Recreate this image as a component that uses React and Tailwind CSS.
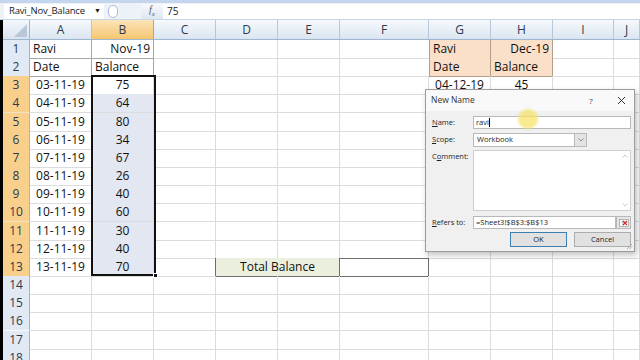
import React from 'react';

const GRID = 'grid grid-cols-[27px_62px_62px_62px_62px_62px_89px_62px_62px_61px_26px]';
const COLS = ['A', 'B', 'C', 'D', 'E', 'F', 'G', 'H', 'I', 'J'];

const dates = ['03-11-19', '04-11-19', '05-11-19', '06-11-19', '07-11-19', '08-11-19', '09-11-19', '10-11-19', '11-11-19', '12-11-19', '13-11-19'];
const values = [75, 64, 80, 34, 67, 26, 40, 60, 30, 40, 70];

const GRIDLINE = 'border-r border-b border-[#dadcdd]';

// returns { text, cls, span } for a cell; null means skip (merged away)
function cellFor(row, col) {
  let text = '';
  let cls = GRIDLINE + ' justify-center';
  let span = false;

  if (row <= 2 && (col === 'A' || col === 'B')) {
    cls = 'border-r border-b border-[#a6a6a6] justify-start pl-[3px]';
    if (row === 1 && col === 'A') text = 'Ravi';
    if (row === 1 && col === 'B') { text = 'Nov-19'; cls = 'border-r border-b border-[#a6a6a6] justify-end pr-[3px]'; }
    if (row === 2 && col === 'A') text = 'Date';
    if (row === 2 && col === 'B') text = 'Balance';
  }
  if (row <= 2 && col === 'F') cls = 'border-b border-[#dadcdd]';
  if (row <= 2 && (col === 'G' || col === 'H')) {
    cls = 'border-r border-b border-[#b39e8b] bg-[#fbe0c9] justify-start pl-[3px]';
    if (col === 'G') cls = 'border-l border-r border-b border-[#b39e8b] bg-[#fbe0c9] justify-start pl-[3px]';
    if (row === 1 && col === 'G') text = 'Ravi';
    if (row === 1 && col === 'H') { text = 'Dec-19'; cls = 'border-r border-b border-[#b39e8b] bg-[#fbe0c9] justify-end pr-[3px]'; }
    if (row === 2 && col === 'G') text = 'Date';
    if (row === 2 && col === 'H') text = 'Balance';
  }
  if (row >= 3 && row <= 13) {
    if (col === 'A') text = dates[row - 3];
    if (col === 'B') {
      text = String(values[row - 3]);
      cls = row === 3 ? GRIDLINE + ' justify-center bg-white' : GRIDLINE + ' justify-center bg-[#e2e7f2]';
    }
  }
  if (row === 3 && col === 'G') text = '04-12-19';
  if (row === 3 && col === 'H') text = '45';

  if (row === 12 && (col === 'D' || col === 'E' || col === 'F')) cls = 'border-r border-b border-r-[#dadcdd] border-b-[#6e6e6e]';
  if (row === 13) {
    if (col === 'C') cls = 'border-r border-b border-r-[#6e6e6e] border-b-[#dadcdd]';
    if (col === 'D') { text = 'Total Balance'; cls = 'border-r border-b border-[#6e6e6e] bg-[#ebf0de] justify-center'; span = true; }
    if (col === 'E') return null;
    if (col === 'F') cls = 'border-r border-b border-[#6e6e6e]';
  }
  return { text, cls, span };
}

const RowHeader = ({ row }) => {
  const selected = row >= 3 && row <= 13;
  return (
    <div
      className={
        selected
          ? 'flex items-center justify-center border-r border-b border-r-[#9eb6ce] border-b-[#f2e2c2] bg-[#f8d08c] text-[#2d3a4c]'
          : 'flex items-center justify-center border-r border-b border-r-[#9eb6ce] border-b-[#f7f9fc] bg-[#e1e9f5] text-[#2d3a4c]'
      }
    >
      {row}
    </div>
  );
};

const SheetRow = ({ row }) => (
  <div className={`${GRID} h-[18.17px]`}>
    <RowHeader row={row} />
    {COLS.map((col) => {
      const cell = cellFor(row, col);
      if (!cell) return null;
      return (
        <div
          key={col}
          className={`${cell.span ? 'col-span-2' : ''} flex items-center overflow-hidden whitespace-nowrap ${cell.cls}`}
        >
          {cell.text}
        </div>
      );
    })}
  </div>
);

const FormulaBar = () => (
  <div className="flex flex-col">
    <div className="h-[3px] bg-[#c3d6ed]" />
    <div className="h-[17px] flex items-center bg-[#edf2f9] border-b border-[#c9d6e6]">
      <div className="ml-[4px] w-[100px] h-[15px] bg-white flex items-center pl-[5px] pr-[3px]">
        <span className="flex-1 text-[9.5px] tracking-[-0.2px] text-[#1b1b1b]">Ravi_Nov_Balance</span>
        <span className="text-[7px] text-[#222]">▼</span>
      </div>
      <div className="ml-[4px] w-[10px] h-[13px] rounded-full border border-[#a9bcd4] bg-white" />
      <div className="ml-[23px] w-[22px] h-[15px] flex items-center justify-center bg-linear-to-b from-[#f7f9fc] to-[#dde6f1]">
        <span className="font-['Liberation_Serif',serif] italic text-[10px] text-[#555]">
          f<span className="text-[7px] align-sub">x</span>
        </span>
      </div>
      <div className="flex-1 h-[15px] bg-white flex items-center pl-[4px] text-[10px] text-[#1b1b1b]">75</div>
    </div>
  </div>
);

const ColumnHeader = () => (
  <div className={`${GRID} h-[20px] border-b border-[#9eb6ce]`}>
    <div className="border-r border-[#9eb6ce] bg-linear-to-b from-[#f4f7fb] to-[#dae4f0]">
      <svg width="27" height="19" viewBox="0 0 27 19">
        <polygon points="24,4 24,17 11,17" fill="#b9c7d9" />
      </svg>
    </div>
    {COLS.map((col) => (
      <div
        key={col}
        className={
          col === 'B'
            ? 'flex items-center justify-center border-r border-[#c9a35a] bg-linear-to-b from-[#fbe4b8] to-[#f5c66f] text-[#2d3a4c]'
            : 'flex items-center justify-center border-r border-[#b6c7dc] bg-linear-to-b from-[#f6f9fc] to-[#dbe5f1] text-[#2d3a4c]'
        }
      >
        {col}
      </div>
    ))}
  </div>
);

const NewNameDialog = () => (
  <div className="absolute left-[425px] top-[89px] w-[210px] h-[163px] bg-[#f0f0f0] border border-[#9c9c9c] shadow-[2px_3px_6px_rgba(0,0,0,0.25)] flex flex-col text-[7.5px] text-[#1e1e1e]">
    {/* title bar */}
    <div className="h-[21px] bg-[#f9f9f9] flex items-center pl-[5px] pr-[8px]">
      <span className="flex-1 text-[8.5px] text-[#333]">New Name</span>
      <span className="w-[10px] text-center text-[8px] text-[#444] mr-[21px]">?</span>
      <svg width="9" height="9" viewBox="0 0 9 9">
        <path d="M1 1 L8 8 M8 1 L1 8" stroke="#333" strokeWidth="1" />
      </svg>
    </div>

    <div className="relative flex-1 flex flex-col pl-[6px] pr-[3px] pt-[5px]">
      {/* name */}
      <div className="flex items-center h-[13px]">
        <span className="w-[41px]"><span className="underline">N</span>ame:</span>
        <div className="flex-1 h-[13px] bg-white border border-[#b9b9b9] flex items-center pl-[2px]">
          ravi<span className="w-px h-[9px] bg-black" />
        </div>
      </div>
      {/* scope */}
      <div className="flex items-center h-[14px] mt-[4px]">
        <span className="w-[41px]"><span className="underline">S</span>cope:</span>
        <div className="w-[114px] h-[14px] bg-white border border-[#b9b9b9] flex items-center pl-[3px]">
          <span className="flex-1">Workbook</span>
          <div className="w-[12px] h-full bg-[#e3e3e3] border-l border-[#b9b9b9] flex items-center justify-center">
            <svg width="6" height="4" viewBox="0 0 6 4">
              <path d="M0.5 0.5 L3 3 L5.5 0.5" stroke="#777" fill="none" strokeWidth="0.8" />
            </svg>
          </div>
        </div>
      </div>
      {/* comment */}
      <div className="flex items-start h-[61px] mt-[3px]">
        <span className="w-[41px] pt-[1px]">C<span className="underline">o</span>mment:</span>
        <div className="flex-1 h-[61px] bg-white border border-[#cfcfcf] flex justify-end">
          <div className="w-[10px] h-full flex flex-col items-center justify-between py-[3px]">
            <svg width="6" height="4" viewBox="0 0 6 4">
              <path d="M0.5 3.5 L3 1 L5.5 3.5" stroke="#bbb" fill="none" strokeWidth="0.8" />
            </svg>
            <svg width="6" height="4" viewBox="0 0 6 4">
              <path d="M0.5 0.5 L3 3 L5.5 0.5" stroke="#bbb" fill="none" strokeWidth="0.8" />
            </svg>
          </div>
        </div>
      </div>
      {/* refers to */}
      <div className="flex items-center h-[13px] mt-[5px]">
        <span className="w-[41px]"><span className="underline">R</span>efers to:</span>
        <div className="flex-1 h-[13px] bg-white border border-[#b9b9b9] flex items-center pl-[2px]">=Sheet3!$B$3:$B$13</div>
        <div className="w-[15px] h-[13px] bg-[#e6e6e6] border border-[#b9b9b9] flex items-center justify-center">
          <svg width="10" height="8" viewBox="0 0 10 8">
            <rect x="0.5" y="0.5" width="9" height="7" fill="#fff" stroke="#8a8a8a" strokeWidth="0.6" />
            <path d="M0.5 3 H9.5 M3.5 0.5 V7.5" stroke="#b0b0b0" strokeWidth="0.5" />
            <path d="M4 2 L8 6 M8 2 L4 6" stroke="#d4242b" strokeWidth="1.2" />
          </svg>
        </div>
      </div>
      {/* buttons */}
      <div className="flex justify-end gap-[7px] mt-[3px]">
        <div className="w-[57px] h-[15px] bg-[#e1e1e1] border border-[#3c7fb1] flex items-center justify-center">OK</div>
        <div className="w-[57px] h-[15px] bg-[#e1e1e1] border border-[#adadad] flex items-center justify-center">Cancel</div>
      </div>

      {/* pointer highlight */}
      <div className="absolute left-[92px] top-[-2px] w-[20px] h-[20px] rounded-full bg-[#f7e26a]/75 blur-[1px]" />
      {/* resize grip */}
      <svg className="absolute right-[1px] bottom-[1px]" width="7" height="7" viewBox="0 0 7 7">
        <path d="M6 1 L1 6 M6 3.5 L3.5 6" stroke="#a0a0a0" strokeWidth="0.8" />
      </svg>
    </div>
  </div>
);

export default function App() {
  const rows = Array.from({ length: 18 }, (_, i) => i + 1);
  return (
    <div className="relative w-[640px] h-[360px] overflow-hidden bg-white font-['Open_Sans',sans-serif] text-[12px] text-[#111]">
      <FormulaBar />
      <div className="flex">
        <div className="w-[3px] bg-black shrink-0" />
        <div className="relative flex-1">
          <ColumnHeader />
          {rows.map((r) => (
            <SheetRow key={r} row={r} />
          ))}
          {/* selection B3:B13 */}
          <div className="absolute left-[88px] top-[55px] w-[65px] h-[201px] border-2 border-[#111]" />
          <div className="absolute left-[150px] top-[253px] w-[5px] h-[5px] bg-[#111] border border-white" />
        </div>
      </div>
      <NewNameDialog />
    </div>
  );
}
